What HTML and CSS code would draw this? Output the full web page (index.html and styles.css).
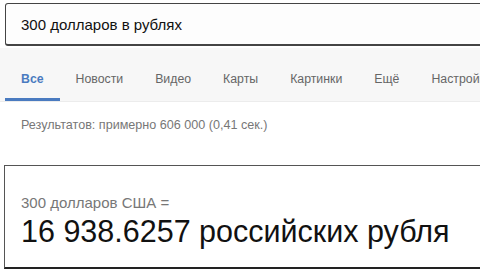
FILE: index.html
```html
<!DOCTYPE html>
<html lang="ru">
<head>
    <meta charset="UTF-8">
    <meta name="viewport" content="width=device-width, initial-scale=1.0">
    <title>300 долларов в рублях</title>
    <link rel="stylesheet" href="styles.css">
</head>
<body>

<div class="search-box">300 долларов в рублях</div>

<div class="tabs">
    <div class="tab active">Все</div>
    <div class="tab">Новости</div>
    <div class="tab">Видео</div>
    <div class="tab">Карты</div>
    <div class="tab">Картинки</div>
    <div class="tab">Ещё</div>
    <div class="tab">Настройки</div>
</div>

<div class="stats">Результатов: примерно 606 000 (0,41 сек.)</div>

<div class="converter">
    <div class="from">300 долларов США =</div>
    <div class="to">16 938.6257 российских рубля</div>
</div>

</body>
</html>
```

FILE: styles.css
```css
body {
    margin: 0;
    width: 480px;
    height: 275px;
    overflow: hidden;
    background: #fff;
    font-family: "Liberation Sans", Arial, sans-serif;
    color: #222;
}

.search-box {
    margin: 3px -20px 0 5px;
    height: 40px;
    border: 1px solid #444;
    border-bottom-width: 2px;
    border-radius: 3px 0 0 3px;
    padding-left: 15px;
    display: flex;
    align-items: center;
    font-size: 15px;
    color: #111;
    background: #fdfdfd;
}

.tabs {
    margin-top: 2px;
    height: 53px;
    background: #f7f7f7;
    border-bottom: 1px solid #ececec;
    display: flex;
    padding-left: 5px;
    white-space: nowrap;
}

.tab {
    padding: 11px 16px 0;
    display: flex;
    align-items: center;
    font-size: 12.3px;
    color: #666;
    border-bottom: 3px solid transparent;
}

.tab.active {
    color: #4a7bc0;
    font-weight: bold;
    border-bottom-color: #4a7bc0;
}

.stats {
    padding: 16px 0 0 21px;
    font-size: 12.6px;
    color: #777;
}

.converter {
    margin: 33px -20px 0 4px;
    height: 101px;
    border: 1px solid #555;
    border-bottom: 2px solid #222;
    padding-left: 16px;
}

.converter .from {
    margin-top: 28px;
    font-size: 15px;
    color: #777;
}

.converter .to {
    margin-top: 3px;
    font-size: 30.5px;
    color: #111;
    white-space: nowrap;
}
```
